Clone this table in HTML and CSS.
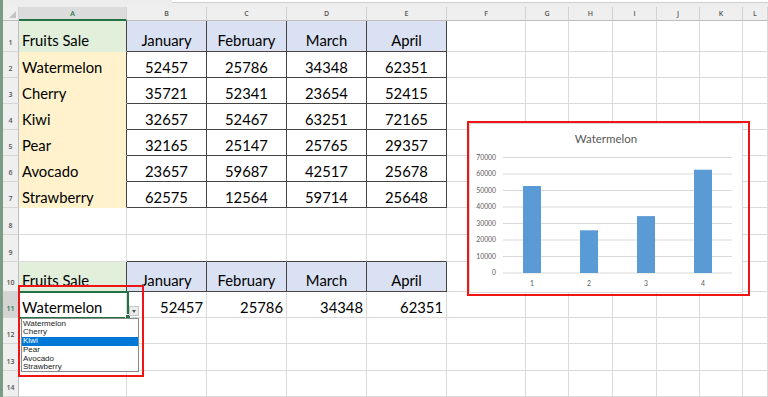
FILE: index.html
```html
<!DOCTYPE html>
<html>
<head>
<meta charset="utf-8">
<link rel="stylesheet" href="styles.css">
</head>
<body>
<div class="page">
  <div class="strip"></div>
  <div class="sheet">
    <div class="topbar"><div class="sp"></div><div class="fx"></div></div>
    <div class="row hdr">
      <div class="corner"></div><div class="ch sel">A</div><div class="ch">B</div><div class="ch">C</div><div class="ch">D</div><div class="ch">E</div><div class="ch">F</div><div class="ch">G</div><div class="ch">H</div><div class="ch">I</div><div class="ch">J</div><div class="ch">K</div><div class="ch">L</div>
    </div>
    <div class="row r1">
      <div class="rh">1</div><div class="c g tb">Fruits Sale</div><div class="c b tb ctr">January</div><div class="c b tb ctr">February</div><div class="c b tb ctr">March</div><div class="c b tb ctr">April</div><div class="c"></div><div class="c"></div><div class="c"></div><div class="c"></div><div class="c"></div><div class="c"></div><div class="c"></div>
    </div>
    <div class="row rn">
      <div class="rh">2</div><div class="c y">Watermelon</div><div class="c tb ctr">52457</div><div class="c tb ctr">25786</div><div class="c tb ctr">34348</div><div class="c tb ctr">62351</div><div class="c"></div><div class="c"></div><div class="c"></div><div class="c"></div><div class="c"></div><div class="c"></div><div class="c"></div>
    </div>
    <div class="row rn">
      <div class="rh">3</div><div class="c y">Cherry</div><div class="c tb ctr">35721</div><div class="c tb ctr">52341</div><div class="c tb ctr">23654</div><div class="c tb ctr">52415</div><div class="c"></div><div class="c"></div><div class="c"></div><div class="c"></div><div class="c"></div><div class="c"></div><div class="c"></div>
    </div>
    <div class="row rn">
      <div class="rh">4</div><div class="c y">Kiwi</div><div class="c tb ctr">32657</div><div class="c tb ctr">52467</div><div class="c tb ctr">63251</div><div class="c tb ctr">72165</div><div class="c"></div><div class="c"></div><div class="c"></div><div class="c"></div><div class="c"></div><div class="c"></div><div class="c"></div>
    </div>
    <div class="row rn">
      <div class="rh">5</div><div class="c y">Pear</div><div class="c tb ctr">32165</div><div class="c tb ctr">25147</div><div class="c tb ctr">25765</div><div class="c tb ctr">29357</div><div class="c"></div><div class="c"></div><div class="c"></div><div class="c"></div><div class="c"></div><div class="c"></div><div class="c"></div>
    </div>
    <div class="row rn">
      <div class="rh">6</div><div class="c y">Avocado</div><div class="c tb ctr">23657</div><div class="c tb ctr">59687</div><div class="c tb ctr">42517</div><div class="c tb ctr">25678</div><div class="c"></div><div class="c"></div><div class="c"></div><div class="c"></div><div class="c"></div><div class="c"></div><div class="c"></div>
    </div>
    <div class="row rn">
      <div class="rh">7</div><div class="c y">Strawberry</div><div class="c tb ctr">62575</div><div class="c tb ctr">12564</div><div class="c tb ctr">59714</div><div class="c tb ctr">25648</div><div class="c"></div><div class="c"></div><div class="c"></div><div class="c"></div><div class="c"></div><div class="c"></div><div class="c"></div>
    </div>
    <div class="row r27">
      <div class="rh">8</div><div class="c"></div><div class="c"></div><div class="c"></div><div class="c"></div><div class="c"></div><div class="c"></div><div class="c"></div><div class="c"></div><div class="c"></div><div class="c"></div><div class="c"></div><div class="c"></div>
    </div>
    <div class="row r27">
      <div class="rh">9</div><div class="c"></div><div class="c dbot"></div><div class="c dbot"></div><div class="c dbot"></div><div class="c dbot"></div><div class="c"></div><div class="c"></div><div class="c"></div><div class="c"></div><div class="c"></div><div class="c"></div><div class="c"></div>
    </div>
    <div class="row r10">
      <div class="rh">10</div><div class="c g tb">Fruits Sale</div><div class="c b tb ctr">January</div><div class="c b tb ctr">February</div><div class="c b tb ctr">March</div><div class="c b tb ctr">April</div><div class="c"></div><div class="c"></div><div class="c"></div><div class="c"></div><div class="c"></div><div class="c"></div><div class="c"></div>
    </div>
    <div class="row rn">
      <div class="rh sel">11</div><div class="c">Watermelon</div><div class="c rt">52457</div><div class="c rt">25786</div><div class="c rt">34348</div><div class="c rt">62351</div><div class="c"></div><div class="c"></div><div class="c"></div><div class="c"></div><div class="c"></div><div class="c"></div><div class="c"></div>
    </div>
    <div class="row rn">
      <div class="rh">12</div><div class="c"></div><div class="c"></div><div class="c"></div><div class="c"></div><div class="c"></div><div class="c"></div><div class="c"></div><div class="c"></div><div class="c"></div><div class="c"></div><div class="c"></div><div class="c"></div>
    </div>
    <div class="row r27">
      <div class="rh">13</div><div class="c"></div><div class="c"></div><div class="c"></div><div class="c"></div><div class="c"></div><div class="c"></div><div class="c"></div><div class="c"></div><div class="c"></div><div class="c"></div><div class="c"></div><div class="c"></div>
    </div>
    <div class="row rn">
      <div class="rh">14</div><div class="c"></div><div class="c"></div><div class="c"></div><div class="c"></div><div class="c"></div><div class="c"></div><div class="c"></div><div class="c"></div><div class="c"></div><div class="c"></div><div class="c"></div><div class="c"></div>
    </div>
  </div>

  <div class="selbox"></div>
  <div class="handle"></div>
  <div class="ddbtn"><span class="tri"></span></div>
  <div class="ddlist">
    <div class="it">Watermelon</div>
    <div class="it">Cherry</div>
    <div class="it on">Kiwi</div>
    <div class="it">Pear</div>
    <div class="it">Avocado</div>
    <div class="it">Strawberry</div>
  </div>

  <div class="chart">
    <svg width="272" height="168" viewBox="0 0 272 168">
      <text class="title" x="136" y="19" text-anchor="middle">Watermelon</text>
      <g class="grid">
        <line x1="33" x2="262" y1="33.5" y2="33.5"/>
        <line x1="33" x2="262" y1="50" y2="50"/>
        <line x1="33" x2="262" y1="66.5" y2="66.5"/>
        <line x1="33" x2="262" y1="83" y2="83"/>
        <line x1="33" x2="262" y1="99.5" y2="99.5"/>
        <line x1="33" x2="262" y1="116" y2="116"/>
        <line x1="33" x2="262" y1="132.5" y2="132.5"/>
        <line x1="33" x2="262" y1="149" y2="149"/>
      </g>
      <g class="yl" text-anchor="end">
        <text x="26" y="35.5">70000</text>
        <text x="26" y="52">60000</text>
        <text x="26" y="68.5">50000</text>
        <text x="26" y="85">40000</text>
        <text x="26" y="101.5">30000</text>
        <text x="26" y="118">20000</text>
        <text x="26" y="134.5">10000</text>
        <text x="26" y="151">0</text>
      </g>
      <g class="bars">
        <rect x="53" y="62" width="18" height="87"/>
        <rect x="110" y="106.3" width="18" height="42.7"/>
        <rect x="167" y="92.1" width="18" height="56.9"/>
        <rect x="224" y="45.7" width="18" height="103.3"/>
      </g>
      <g class="xl" text-anchor="middle">
        <text x="62" y="161.5">1</text>
        <text x="119" y="161.5">2</text>
        <text x="176" y="161.5">3</text>
        <text x="233" y="161.5">4</text>
      </g>
    </svg>
  </div>

  <div class="redbox rb-dd"></div>
  <div class="redbox rb-chart"></div>
</div>
</body>
</html>
```

FILE: styles.css
```css
html, body {
  margin: 0;
  padding: 0;
  background: #ffffff;
}
body {
  width: 768px;
  height: 397px;
  overflow: hidden;
  font-family: Lato, "Open Sans", sans-serif;
}
.page {
  position: relative;
  display: flex;
  width: 768px;
  height: 397px;
}
.strip {
  width: 3px;
  background: #7a9c84;
}
.sheet {
  flex: 1;
  min-width: 0;
}
.topbar {
  height: 7px;
  background: #ededed;
  display: flex;
}
.topbar .sp {
  width: 169px;
}
.topbar .fx {
  flex: 1;
  height: 2px;
  background: #ffffff;
  border-bottom: 1px solid #d0d0d0;
}
.row {
  display: grid;
  grid-template-columns: 16px 108px 80px 80px 80px 80px 79px 43px 44px 44px 43px 43px 1fr;
}
.row > div {
  box-sizing: border-box;
  border-right: 1px solid #dadada;
  border-bottom: 1px solid #dadada;
}
.hdr { height: 14px; background: #efefef; }
.r1 { height: 31px; }
.rn { height: 26px; }
.r27 { height: 27px; }
.r10 { height: 30px; }

.hdr > div {
  border-right-color: #d2d2d2;
  border-bottom-color: #bdbdbd;
  font-family: "Open Sans", sans-serif;
  font-weight: 600;
  font-size: 7px;
  color: #555555;
  display: flex;
  align-items: center;
  justify-content: center;
}
.corner {
  justify-content: flex-end !important;
  align-items: flex-end !important;
  padding: 0 2px 2px 0;
}
.corner::after {
  content: "";
  width: 0;
  height: 0;
  border-left: 7px solid transparent;
  border-bottom: 7px solid #c4c4c4;
}
.hdr .ch.sel {
  background: #dcdcdc;
  color: #217346;
  border-bottom: 2px solid #217346;
}
.rh {
  background: #efefef;
  border-right-color: #bdbdbd !important;
  border-bottom-color: #d6d6d6 !important;
  font-family: "Open Sans", sans-serif;
  font-weight: 600;
  font-size: 7px;
  line-height: 1;
  color: #555555;
  display: flex;
  align-items: flex-end;
  justify-content: center;
  padding-bottom: 5px;
}
.rh.sel {
  background: #d4d4d4;
  color: #217346;
}
.c {
  display: flex;
  align-items: flex-end;
  padding: 0 3px;
  font-size: 14.8px;
  line-height: 1.2;
  color: #000000;
  white-space: nowrap;
}
.r1 .c { padding-bottom: 1px; }
.r10 .c { padding-bottom: 1px; }
.ctr { justify-content: center; }
.rt { justify-content: flex-end; }
.tb {
  border-right-color: #444444 !important;
  border-bottom-color: #444444 !important;
}
.dbot { border-bottom-color: #444444 !important; }
.g { background: #e2efda; }
.b { background: #d9e1f2; }
.y {
  background: #fff2cc;
  border-right-color: #444444 !important;
  border-bottom-color: #fff2cc !important;
}
.r1 .g { border-bottom-color: #e2efda !important; }

.selbox {
  position: absolute;
  left: 18px;
  top: 291px;
  width: 111px;
  height: 28px;
  box-sizing: border-box;
  border: 2px solid #217346;
}
.handle {
  position: absolute;
  left: 125px;
  top: 314px;
  width: 4px;
  height: 4px;
  background: #217346;
  border: 1px solid #ffffff;
}
.ddbtn {
  position: absolute;
  left: 129px;
  top: 306px;
  width: 10px;
  height: 10px;
  box-sizing: border-box;
  background: #ececec;
  border: 1px solid #c8c8c8;
  display: flex;
  align-items: center;
  justify-content: center;
}
.ddbtn .tri {
  width: 0;
  height: 0;
  border-left: 2.5px solid transparent;
  border-right: 2.5px solid transparent;
  border-top: 3px solid #555555;
}
.ddlist {
  position: absolute;
  left: 21px;
  top: 318px;
  width: 118px;
  height: 54px;
  box-sizing: border-box;
  background: #ffffff;
  border: 1px solid #8a8a8a;
  padding-top: 0.5px;
}
.ddlist .it {
  height: 8.8px;
  line-height: 8.8px;
  padding-left: 1px;
  font-family: "Liberation Sans", Arial, sans-serif;
  font-size: 8px;
  color: #222222;
  white-space: nowrap;
}
.ddlist .it.on {
  background: #0078d7;
  color: #ffffff;
}

.chart {
  position: absolute;
  left: 469px;
  top: 123px;
  width: 274px;
  height: 170px;
  box-sizing: border-box;
  background: #ffffff;
  border: 1px solid #d9d9d9;
}
.chart svg {
  display: block;
  font-family: Lato, "Open Sans", sans-serif;
}
.chart .title {
  font-size: 11.5px;
  fill: #595959;
}
.chart .grid line {
  stroke: #d9d9d9;
  stroke-width: 1;
}
.chart .yl text,
.chart .xl text {
  font-size: 6.8px;
  fill: #595959;
}
.chart .bars rect {
  fill: #5b9bd5;
}

.redbox {
  position: absolute;
  box-sizing: border-box;
  border: 2px solid #f01414;
}
.rb-dd {
  left: 18px;
  top: 285px;
  width: 126px;
  height: 92px;
}
.rb-chart {
  left: 467px;
  top: 121px;
  width: 283px;
  height: 175px;
}
```
